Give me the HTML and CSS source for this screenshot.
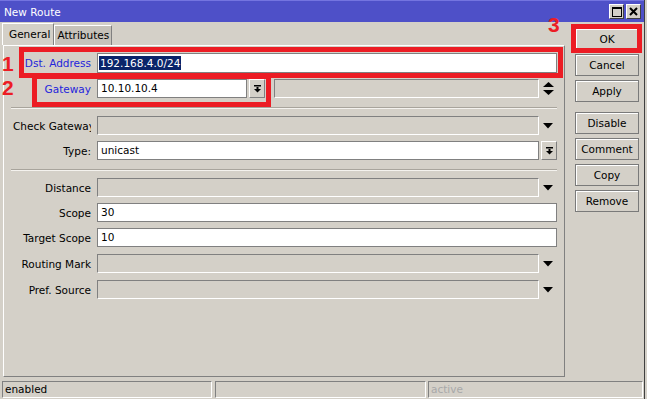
FILE: index.html
```html
<!DOCTYPE html>
<html lang="en">
<head>
    <meta charset="UTF-8">
    <title>New Route</title>
    <link rel="stylesheet" href="styles.css">
</head>
<body>
    <div class="window">
        <div class="titlebar">
            <span class="title">New Route</span>
            <div class="title-btns">
                <span class="tbtn">
                    <svg width="10" height="10" viewBox="0 0 10 10"><rect x="0.5" y="0.5" width="9" height="9" fill="none" stroke="#000"/><rect x="0" y="0" width="10" height="2" fill="#000"/></svg>
                </span>
                <span class="tbtn">
                    <svg width="9" height="9" viewBox="0 0 9 9"><path d="M1 1 L8 8 M8 1 L1 8" stroke="#000" stroke-width="2"/></svg>
                </span>
            </div>
        </div>

        <div class="main">
            <div class="left">
                <div class="tabs">
                    <span class="tab active">General</span>
                    <span class="tab">Attributes</span>
                </div>
                <div class="panel">
                    <div class="row tall">
                        <span class="label changed">Dst. Address</span>
                        <span class="field sel-field"><span class="sel">192.168.4.0/24</span></span>
                    </div>
                    <div class="row">
                        <span class="label changed">Gateway</span>
                        <span class="field gw">10.10.10.4</span>
                        <span class="ddbtn"><svg width="7" height="8" viewBox="0 0 7 8"><rect x="0" y="0" width="7" height="1.5" fill="#000"/><rect x="2.5" y="2" width="2" height="2" fill="#000"/><polygon points="0,4 7,4 3.5,7.5" fill="#000"/></svg></span>
                        <span class="field off gw-extra"></span>
                        <span class="arrow"><svg width="11" height="15" viewBox="0 0 11 15"><polygon points="0,6 11,6 5.5,1" fill="#000"/><polygon points="0,9 11,9 5.5,14" fill="#000"/></svg></span>
                    </div>

                    <div class="sep"></div>

                    <div class="row">
                        <span class="label clip">Check Gateway</span>
                        <span class="field off"></span>
                        <span class="arrow"><svg width="10" height="6" viewBox="0 0 10 6"><polygon points="0,0 10,0 5,5.5" fill="#000"/></svg></span>
                    </div>
                    <div class="row">
                        <span class="label">Type:</span>
                        <span class="field">unicast</span>
                        <span class="ddbtn"><svg width="7" height="8" viewBox="0 0 7 8"><rect x="0" y="0" width="7" height="1.5" fill="#000"/><rect x="2.5" y="2" width="2" height="2" fill="#000"/><polygon points="0,4 7,4 3.5,7.5" fill="#000"/></svg></span>
                    </div>

                    <div class="sep"></div>

                    <div class="row">
                        <span class="label">Distance</span>
                        <span class="field off"></span>
                        <span class="arrow"><svg width="10" height="6" viewBox="0 0 10 6"><polygon points="0,0 10,0 5,5.5" fill="#000"/></svg></span>
                    </div>
                    <div class="row">
                        <span class="label">Scope</span>
                        <span class="field">30</span>
                    </div>
                    <div class="row">
                        <span class="label">Target Scope</span>
                        <span class="field">10</span>
                    </div>
                    <div class="row lower">
                        <span class="label">Routing Mark</span>
                        <span class="field off"></span>
                        <span class="arrow"><svg width="10" height="6" viewBox="0 0 10 6"><polygon points="0,0 10,0 5,5.5" fill="#000"/></svg></span>
                    </div>
                    <div class="row lower">
                        <span class="label">Pref. Source</span>
                        <span class="field off"></span>
                        <span class="arrow"><svg width="10" height="6" viewBox="0 0 10 6"><polygon points="0,0 10,0 5,5.5" fill="#000"/></svg></span>
                    </div>
                </div>
            </div>

            <div class="buttons">
                <span class="btn">OK</span>
                <span class="btn">Cancel</span>
                <span class="btn">Apply</span>
                <span class="btn spaced">Disable</span>
                <span class="btn">Comment</span>
                <span class="btn">Copy</span>
                <span class="btn">Remove</span>
            </div>
        </div>

        <div class="statusbar">
            <span class="pane first">enabled</span>
            <span class="pane second"></span>
            <span class="pane third">active</span>
        </div>

        <!-- annotations -->
        <div class="mark mark-dst"></div>
        <div class="mark mark-gw"></div>
        <div class="mark mark-ok"></div>
        <span class="num num-1">1</span>
        <span class="num num-2">2</span>
        <span class="num num-3">3</span>
    </div>
</body>
</html>
```

FILE: styles.css
```css
* {
    box-sizing: border-box;
}
body {
    margin: 0;
    background: #d4d0c8;
    font-family: "DejaVu Sans", Verdana, sans-serif;
    font-size: 10.5px;
    color: #000;
}
.window {
    position: relative;
    width: 645px;
    height: 399px;
    border-right: 1px solid #404040;
    display: flex;
    flex-direction: column;
}
.titlebar {
    height: 22px;
    flex: none;
    background: #4e50c8;
    border-top: 1px solid #7474e0;
    color: #fff;
    display: flex;
    align-items: center;
    justify-content: space-between;
    padding: 0 3px 0 4px;
}
.title-btns {
    display: flex;
    gap: 2px;
}
.tbtn {
    width: 15px;
    height: 15px;
    background: #d4d0c8;
    border: 1px solid;
    border-color: #fff #404040 #404040 #fff;
    display: flex;
    align-items: center;
    justify-content: center;
}
.main {
    flex: 1;
    display: flex;
    padding: 0 0 3px 2px;
}
.left {
    width: 563px;
    display: flex;
    flex-direction: column;
}
.tabs {
    height: 23px;
    display: flex;
    align-items: flex-end;
}
.tab {
    height: 20px;
    line-height: 18px;
    padding: 0 2px 0 2px;
    border: 1px solid;
    border-bottom: none;
    border-color: #fff #808080 transparent #fff;
    background: #c6c2ba;
}
.tab.active {
    height: 22px;
    line-height: 20px;
    padding: 0 3px 0 6px;
    background: #d4d0c8;
}
.panel {
    flex: 1;
    margin-left: 1px;
    border: 1px solid;
    border-color: #fff #808080 #808080 #fff;
    padding: 7px 7px 0 1px;
    display: flex;
    flex-direction: column;
    gap: 6px;
}
.row {
    display: flex;
    align-items: center;
    height: 19px;
}
.row.tall {
    height: 20px;
}
.row.lower {
    margin-top: 1px;
}
.label {
    width: 88px;
    flex: none;
    text-align: right;
    padding-right: 2px;
    margin-right: 4px;
    white-space: nowrap;
}
.label.changed {
    color: #2424dc;
}
.label.clip {
    width: 86px;
    margin-right: 6px;
    padding: 0 0 0 8px;
    text-align: left;
    overflow: hidden;
}
.field {
    flex: 1;
    height: 100%;
    background: #fff;
    border: 1px solid #808080;
    padding: 0 3px;
    line-height: 17px;
    white-space: nowrap;
}
.field.off {
    background: #d4d0c8;
    border-color: #808080 #fff #fff #808080;
}
.field.sel-field {
    padding-left: 1px;
    line-height: 18px;
}
.sel {
    background: #0a246a;
    color: #fff;
    padding: 1px;
}
.field.gw {
    flex: none;
    width: 150px;
}
.field.gw-extra {
    margin-left: 9px;
}
.ddbtn {
    width: 16px;
    height: 19px;
    margin-left: 2px;
    border: 1px solid;
    border-color: #fff #808080 #808080 #fff;
    display: flex;
    align-items: center;
    justify-content: center;
}
.arrow {
    width: 18px;
    flex: none;
    display: flex;
    justify-content: center;
}
.sep {
    height: 2px;
    margin: 3px 0 1px 6px;
    border-top: 1px solid #a8a49c;
    border-bottom: 1px solid #f4f2ee;
}
.buttons {
    width: 64px;
    margin-left: 10px;
    padding-top: 6px;
    display: flex;
    flex-direction: column;
    gap: 4px;
}
.btn {
    height: 22px;
    line-height: 20px;
    text-align: center;
    border: 1px solid #7a7a7a;
    box-shadow: inset 1px 1px #fff;
}
.btn.spaced {
    margin-top: 6px;
}
.statusbar {
    height: 19px;
    flex: none;
    display: flex;
    padding: 1px 1px 1px 2px;
}
.pane {
    border: 1px solid;
    border-color: #808080 #fff #fff #808080;
    padding-left: 2px;
    line-height: 15px;
}
.pane.first {
    width: 210px;
}
.pane.second {
    width: 211px;
    margin-left: 3px;
}
.pane.third {
    flex: 1;
    margin-left: 2px;
    color: #a8a8a8;
}
.mark {
    position: absolute;
    border: 5px solid #ec1c24;
}
.mark-dst {
    left: 19px;
    top: 47px;
    width: 544px;
    height: 31px;
}
.mark-gw {
    left: 32px;
    top: 74px;
    width: 239px;
    height: 33px;
}
.mark-ok {
    left: 571px;
    top: 24px;
    width: 71px;
    height: 29px;
}
.num {
    position: absolute;
    color: #ec1c24;
    font: bold 21px "Liberation Sans", Arial, sans-serif;
    line-height: 20px;
}
.num-1 {
    left: 2px;
    top: 54px;
}
.num-2 {
    left: 2px;
    top: 78px;
}
.num-3 {
    left: 548px;
    top: 15px;
}
```
